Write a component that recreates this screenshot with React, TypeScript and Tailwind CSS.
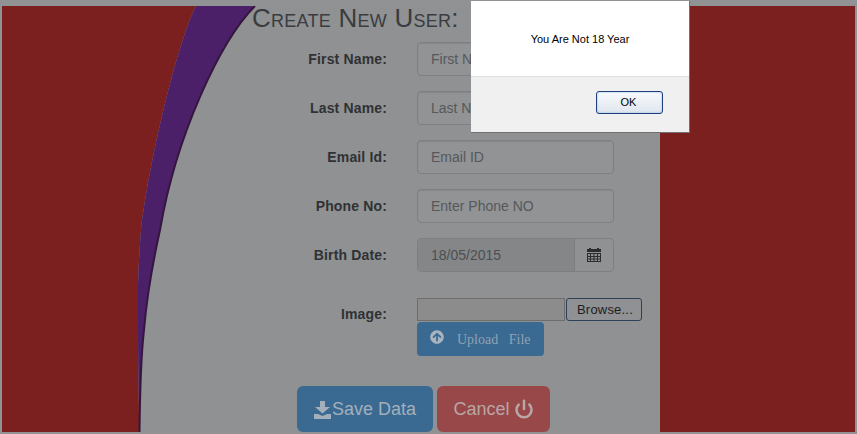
import { FaArrowCircleUp } from "react-icons/fa";
import { Power } from "lucide-react";

const sans = "font-['Liberation_Sans',Arial,sans-serif]";

const Row = ({ label, children }: { label: string; children: React.ReactNode }) => (
  <div className="flex items-center gap-[30px]">
    <label className="w-[249px] text-right text-[14px] font-bold tracking-[0.15px] text-[#303134]">{label}</label>
    {children}
  </div>
);

const TextInput = ({ placeholder }: { placeholder: string }) => (
  <div className="flex h-[34px] w-[197px] items-center rounded-[4px] border border-[#7d7f82] bg-[#919395] px-[13px] text-[14px] text-[#56585b] shadow-[inset_0_1px_1px_rgba(0,0,0,0.08)]">
    {placeholder}
  </div>
);

const Curve = () => (
  <svg className="absolute left-0 top-0 h-[426px] w-[130px]" viewBox="0 0 130 426" fill="none">
    <path d="M58 0C40 35 12 150 3 224C0 260-1 300 0 324C0 360 1 400 1.5 426H0V0Z" fill="#7c1f1f" />
    <path d="M58 0H117C82 35 38 130 22 224C14 260 8 300 6 324C3 350 2 380 1.5 426C1 400 0 360 0 324C-1 300 0 260 3 224C12 150 40 35 58 0Z" fill="#4c2069" />
    <path d="M117 0C82 35 38 130 22 224C14 260 8 300 6 324C3 350 2 380 1.5 426" stroke="#34163f" strokeWidth="2" />
  </svg>
);

const CalendarIcon = () => (
  <svg className="h-[14px] w-[14px]" viewBox="0 0 14 14" fill="#2c2d30">
    <path d="M2 0H4V1H10V0H12V1H14V4H0V1H2Z" />
    <path d="M0 5H14V14H0ZM1 6V8H3V6ZM4 6V8H6.5V6ZM7.5 6V8H10V6ZM11 6V8H13V6ZM1 9V10.5H3V9ZM4 9V10.5H6.5V9ZM7.5 9V10.5H10V9ZM11 9V10.5H13V9ZM1 11.5V13H3V11.5ZM4 11.5V13H6.5V11.5ZM7.5 11.5V13H10V11.5ZM11 11.5V13H13V11.5Z" fillRule="evenodd" />
  </svg>
);

const Alert = () => (
  <div className={`absolute left-[471px] top-[1px] w-[219px] border-b border-r border-[#707070] bg-white ${sans}`}>
    <div className="flex h-[75px] items-center justify-center pt-[2px] text-[11px] text-black">You Are Not 18 Year</div>
    <div className="flex h-[56px] justify-end border-t border-[#dfdfdf] bg-[#f0f0f0] pr-[26px] pt-[14px]">
      <button className="h-[23px] w-[67px] rounded-[3px] border border-[#1f3f7f] bg-gradient-to-b from-[#f8fafd] to-[#dfe6ee] pr-[2px] text-[11px] text-black shadow-[inset_0_0_2px_#7fb2e5]">
        OK
      </button>
    </div>
  </div>
);

export default function App() {
  return (
    <div className={`relative h-[434px] w-[857px] bg-[#909294] px-[2px] pb-[2px] pt-[6px] ${sans}`}>
      <div className="h-[426px] bg-[#7c1f1f] pl-[136px]">
        <div className="relative h-[426px] w-[522px] bg-[#8f9193]">
          <Curve />
          <div className="relative flex flex-col">
            <h1 className="ml-[114px] h-[36px] text-[26px] leading-[24px] tracking-[0.25px] text-[#3a3c40] [font-variant:small-caps]">
              Create New User:
            </h1>
            <div className="flex flex-col gap-[15px]">
              <Row label="First Name:"><TextInput placeholder="First Name" /></Row>
              <Row label="Last Name:"><TextInput placeholder="Last Name" /></Row>
              <Row label="Email Id:"><TextInput placeholder="Email ID" /></Row>
              <Row label="Phone No:"><TextInput placeholder="Enter Phone NO" /></Row>
              <Row label="Birth Date:">
                <div className="flex h-[34px] w-[197px] rounded-[4px] border border-[#7d7f82] text-[14px] text-[#4d4f52]">
                  <div className="flex w-[157px] items-center rounded-l-[4px] border-r border-[#7d7f82] bg-[#848688] px-[13px]">18/05/2015</div>
                  <div className="flex flex-1 items-center justify-center"><CalendarIcon /></div>
                </div>
              </Row>
            </div>
            <div className="mt-[26px] flex gap-[30px]">
              <label className="w-[249px] pt-[6px] text-right text-[14px] font-bold tracking-[0.15px] text-[#303134]">Image:</label>
              <div className="flex flex-col gap-px">
                <div className="flex gap-px">
                  <div className="h-[23px] w-[148px] border border-[#6c6e70] bg-[#8b8c8b]" />
                  <button className="h-[23px] w-[76px] rounded-[3px] border border-[#2d4058] bg-[#8f9194] pl-[2px] text-[13px] tracking-[0.2px] text-[#1d1e20]">Browse...</button>
                </div>
                <button className="flex h-[34px] w-[127px] items-center gap-[13px] rounded-[4px] bg-[#3a6992] pl-[13px] pt-[1px] text-[#a9b4be]">
                  <FaArrowCircleUp className="mb-[5px] text-[14px]" />
                  <span className="whitespace-pre font-['Liberation_Serif',serif] text-[14px] text-[#8fa3b5]">Upload   File</span>
                </button>
              </div>
            </div>
            <div className="ml-[159px] mt-[30px] flex gap-[4px] text-[18px]">
              <button className="flex h-[46px] w-[136px] items-center justify-center rounded-[6px] bg-[#3a6992] pt-[1px] text-[#a3b0bb]">
                <svg className="h-[18px] w-[18px]" viewBox="0 0 18 18" fill="currentColor">
                  <path d="M6 0H11V6H16L8.5 12.5L1 6H6Z" />
                  <path d="M0 13H4L8.5 15L13 13H17V18H0Z" />
                </svg>
                Save Data
              </button>
              <button className="flex h-[46px] w-[113px] items-center justify-center gap-[4px] rounded-[6px] bg-[#984848] text-[#b9a6a6]">
                Cancel
                <Power className="h-[20px] w-[20px]" strokeWidth={3} />
              </button>
            </div>
          </div>
        </div>
      </div>
      <Alert />
    </div>
  );
}
